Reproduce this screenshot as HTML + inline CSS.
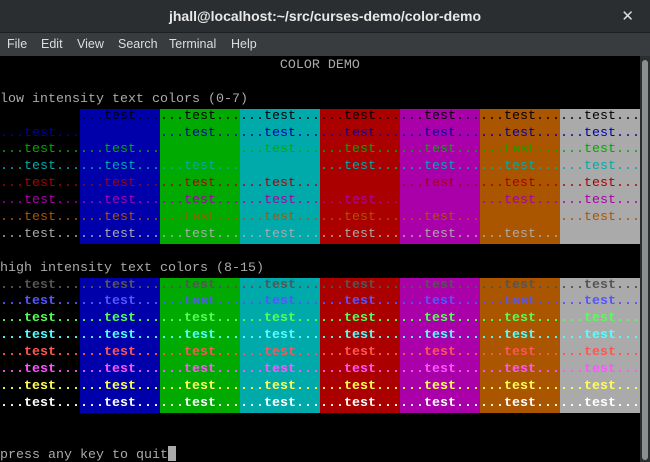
<!DOCTYPE html>
<html><head><meta charset="utf-8"><style>
*{margin:0;padding:0;box-sizing:border-box}
html,body{width:650px;height:462px;overflow:hidden}
body{background:#000;font-family:"Liberation Sans",sans-serif;position:relative}
.title{position:absolute;left:0;top:0;width:650px;height:33px;background:#2b2e30;border-bottom:1px solid #1d1f20;color:#e8e8e8;font-size:14px;font-weight:bold;text-align:center;line-height:33px}
.close{position:absolute;right:16px;top:0;color:#ddd;font-size:15px;font-weight:normal}
.menu{position:absolute;left:0;top:33px;width:650px;height:23px;background:#383c3e;color:#ddd;font-size:12.5px;line-height:23px}
.menu span{position:absolute;top:0}
.term{position:absolute;left:0;top:58px;width:640px;height:404px;background:#000;font-family:"Liberation Mono",monospace;font-size:13.33px;line-height:16.9px;color:#aaa}
.r{height:16.9px;white-space:pre;overflow:hidden}
.r span{display:inline-block;width:80px;height:16.9px;vertical-align:top}
.h span{font-weight:bold}
.sb{position:absolute;left:640px;top:56px;width:10px;height:406px;background:#2a2e2f}
.sl{position:absolute;left:642px;top:60px;width:6px;height:400px;background:#8c8f8f;border-radius:3px}
.r span.cur{display:inline-block;width:8px;height:15px;background:#aaa;vertical-align:-3px}
</style></head><body>
<div class="title">jhall@localhost:~/src/curses-demo/color-demo<span class="close">✕</span></div>
<div class="menu"><span style="left:7px">File</span><span style="left:41px">Edit</span><span style="left:77px">View</span><span style="left:118px">Search</span><span style="left:169px">Terminal</span><span style="left:231px">Help</span></div>
<div class="sb"></div><div class="sl"></div>
<div class="term"><div class="r">                                   COLOR DEMO</div><div class="r"></div><div class="r">low intensity text colors (0-7)</div><div class="r"><span style="color:#000">...test...</span><span style="background:#0000aa;color:#000">...test...</span><span style="background:#00aa00;color:#000">...test...</span><span style="background:#00aaaa;color:#000">...test...</span><span style="background:#aa0000;color:#000">...test...</span><span style="background:#aa00aa;color:#000">...test...</span><span style="background:#aa5500;color:#000">...test...</span><span style="background:#aaaaaa;color:#000">...test...</span></div><div class="r" style="color:#0000aa"><span>...test...</span><span style="background:#0000aa">...test...</span><span style="background:#00aa00">...test...</span><span style="background:#00aaaa">...test...</span><span style="background:#aa0000">...test...</span><span style="background:#aa00aa">...test...</span><span style="background:#aa5500">...test...</span><span style="background:#aaaaaa">...test...</span></div><div class="r" style="color:#00aa00"><span>...test...</span><span style="background:#0000aa">...test...</span><span style="background:#00aa00">...test...</span><span style="background:#00aaaa">...test...</span><span style="background:#aa0000">...test...</span><span style="background:#aa00aa">...test...</span><span style="background:#aa5500">...test...</span><span style="background:#aaaaaa">...test...</span></div><div class="r" style="color:#00aaaa"><span>...test...</span><span style="background:#0000aa">...test...</span><span style="background:#00aa00">...test...</span><span style="background:#00aaaa">...test...</span><span style="background:#aa0000">...test...</span><span style="background:#aa00aa">...test...</span><span style="background:#aa5500">...test...</span><span style="background:#aaaaaa">...test...</span></div><div class="r" style="color:#aa0000"><span>...test...</span><span style="background:#0000aa">...test...</span><span style="background:#00aa00">...test...</span><span style="background:#00aaaa">...test...</span><span style="background:#aa0000">...test...</span><span style="background:#aa00aa">...test...</span><span style="background:#aa5500">...test...</span><span style="background:#aaaaaa">...test...</span></div><div class="r" style="color:#aa00aa"><span>...test...</span><span style="background:#0000aa">...test...</span><span style="background:#00aa00">...test...</span><span style="background:#00aaaa">...test...</span><span style="background:#aa0000">...test...</span><span style="background:#aa00aa">...test...</span><span style="background:#aa5500">...test...</span><span style="background:#aaaaaa">...test...</span></div><div class="r" style="color:#aa5500"><span>...test...</span><span style="background:#0000aa">...test...</span><span style="background:#00aa00">...test...</span><span style="background:#00aaaa">...test...</span><span style="background:#aa0000">...test...</span><span style="background:#aa00aa">...test...</span><span style="background:#aa5500">...test...</span><span style="background:#aaaaaa">...test...</span></div><div class="r" style="color:#aaaaaa"><span>...test...</span><span style="background:#0000aa">...test...</span><span style="background:#00aa00">...test...</span><span style="background:#00aaaa">...test...</span><span style="background:#aa0000">...test...</span><span style="background:#aa00aa">...test...</span><span style="background:#aa5500">...test...</span><span style="background:#aaaaaa">...test...</span></div><div class="r"></div><div class="r">high intensity text colors (8-15)</div><div class="r h" style="color:#555555"><span>...test...</span><span style="background:#0000aa">...test...</span><span style="background:#00aa00">...test...</span><span style="background:#00aaaa">...test...</span><span style="background:#aa0000">...test...</span><span style="background:#aa00aa">...test...</span><span style="background:#aa5500">...test...</span><span style="background:#aaaaaa">...test...</span></div><div class="r h" style="color:#5555ff"><span>...test...</span><span style="background:#0000aa">...test...</span><span style="background:#00aa00">...test...</span><span style="background:#00aaaa">...test...</span><span style="background:#aa0000">...test...</span><span style="background:#aa00aa">...test...</span><span style="background:#aa5500">...test...</span><span style="background:#aaaaaa">...test...</span></div><div class="r h" style="color:#55ff55"><span>...test...</span><span style="background:#0000aa">...test...</span><span style="background:#00aa00">...test...</span><span style="background:#00aaaa">...test...</span><span style="background:#aa0000">...test...</span><span style="background:#aa00aa">...test...</span><span style="background:#aa5500">...test...</span><span style="background:#aaaaaa">...test...</span></div><div class="r h" style="color:#55ffff"><span>...test...</span><span style="background:#0000aa">...test...</span><span style="background:#00aa00">...test...</span><span style="background:#00aaaa">...test...</span><span style="background:#aa0000">...test...</span><span style="background:#aa00aa">...test...</span><span style="background:#aa5500">...test...</span><span style="background:#aaaaaa">...test...</span></div><div class="r h" style="color:#ff5555"><span>...test...</span><span style="background:#0000aa">...test...</span><span style="background:#00aa00">...test...</span><span style="background:#00aaaa">...test...</span><span style="background:#aa0000">...test...</span><span style="background:#aa00aa">...test...</span><span style="background:#aa5500">...test...</span><span style="background:#aaaaaa">...test...</span></div><div class="r h" style="color:#ff55ff"><span>...test...</span><span style="background:#0000aa">...test...</span><span style="background:#00aa00">...test...</span><span style="background:#00aaaa">...test...</span><span style="background:#aa0000">...test...</span><span style="background:#aa00aa">...test...</span><span style="background:#aa5500">...test...</span><span style="background:#aaaaaa">...test...</span></div><div class="r h" style="color:#ffff55"><span>...test...</span><span style="background:#0000aa">...test...</span><span style="background:#00aa00">...test...</span><span style="background:#00aaaa">...test...</span><span style="background:#aa0000">...test...</span><span style="background:#aa00aa">...test...</span><span style="background:#aa5500">...test...</span><span style="background:#aaaaaa">...test...</span></div><div class="r h" style="color:#ffffff"><span>...test...</span><span style="background:#0000aa">...test...</span><span style="background:#00aa00">...test...</span><span style="background:#00aaaa">...test...</span><span style="background:#aa0000">...test...</span><span style="background:#aa00aa">...test...</span><span style="background:#aa5500">...test...</span><span style="background:#aaaaaa">...test...</span></div><div class="r"></div><div class="r"></div><div class="r">press any key to quit<span class="cur"></span></div></div>
</body></html>
